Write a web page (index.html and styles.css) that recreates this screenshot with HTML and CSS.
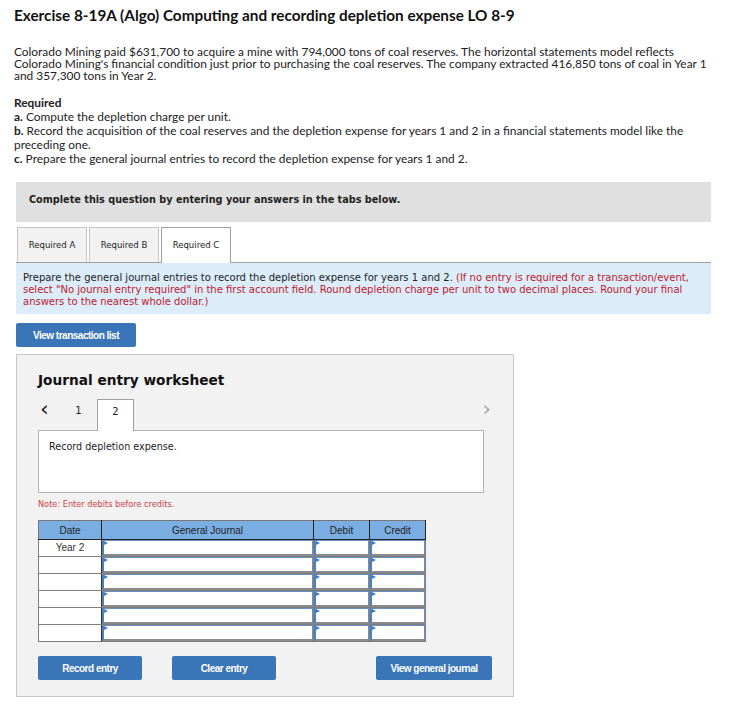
FILE: index.html
```html
<!DOCTYPE html>
<html lang="en">
<head>
  <meta charset="UTF-8">
  <title>Exercise 8-19A (Algo)</title>
  <link rel="stylesheet" href="styles.css">
</head>
<body>

  <h1 class="title">Exercise 8-19A (Algo) Computing and recording depletion expense LO 8-9</h1>

  <p class="intro">Colorado Mining paid $631,700 to acquire a mine with 794,000 tons of coal reserves. The horizontal statements model reflects Colorado Mining's financial condition just prior to purchasing the coal reserves. The company extracted 416,850 tons of coal in Year 1 and 357,300 tons in Year 2.</p>

  <div class="required">
    <div class="req-head">Required</div>
    <div><b>a.</b> Compute the depletion charge per unit.</div>
    <div><b>b.</b> Record the acquisition of the coal reserves and the depletion expense for years 1 and 2 in a financial statements model like the preceding one.</div>
    <div><b>c.</b> Prepare the general journal entries to record the depletion expense for years 1 and 2.</div>
  </div>

  <div class="complete-box">Complete this question by entering your answers in the tabs below.</div>

  <div class="tabs">
    <div class="tab">Required A</div>
    <div class="tab">Required B</div>
    <div class="tab active">Required C</div>
  </div>

  <div class="instructions">
    Prepare the general journal entries to record the depletion expense for years 1 and 2. <span class="red">(If no entry is required for a transaction/event, select "No journal entry required" in the first account field. Round depletion charge per unit to two decimal places. Round your final answers to the nearest whole dollar.)</span>
  </div>

  <button class="btn btn-list">View transaction list</button>

  <div class="worksheet">
    <h2 class="ws-title">Journal entry worksheet</h2>

    <div class="ws-nav">
      <span class="arrow">&lsaquo;</span>
      <span class="num">1</span>
      <span class="num current">2</span>
      <span class="arrow right">&rsaquo;</span>
    </div>

    <div class="ws-desc">Record depletion expense.</div>

    <div class="note">Note: Enter debits before credits.</div>

    <table class="journal">
      <thead>
        <tr>
          <th class="c-date">Date</th>
          <th class="c-acct">General Journal</th>
          <th class="c-amt">Debit</th>
          <th class="c-amt">Credit</th>
        </tr>
      </thead>
      <tbody>
        <tr>
          <td class="date">Year 2</td>
          <td><div class="field"></div></td>
          <td><div class="field"></div></td>
          <td><div class="field"></div></td>
        </tr>
        <tr>
          <td class="date"></td>
          <td><div class="field"></div></td>
          <td><div class="field"></div></td>
          <td><div class="field"></div></td>
        </tr>
        <tr>
          <td class="date"></td>
          <td><div class="field"></div></td>
          <td><div class="field"></div></td>
          <td><div class="field"></div></td>
        </tr>
        <tr>
          <td class="date"></td>
          <td><div class="field"></div></td>
          <td><div class="field"></div></td>
          <td><div class="field"></div></td>
        </tr>
        <tr>
          <td class="date"></td>
          <td><div class="field"></div></td>
          <td><div class="field"></div></td>
          <td><div class="field"></div></td>
        </tr>
        <tr>
          <td class="date"></td>
          <td><div class="field"></div></td>
          <td><div class="field"></div></td>
          <td><div class="field"></div></td>
        </tr>
      </tbody>
    </table>

    <div class="ws-actions">
      <button class="btn btn-record">Record entry</button>
      <button class="btn btn-clear">Clear entry</button>
      <button class="btn btn-view">View general journal</button>
    </div>
  </div>

</body>
</html>
```

FILE: styles.css
```css
body {
  margin: 0;
  padding: 0 43px 0 16px;
  background: #fff;
  color: #222;
  font-family: 'Lato', 'Liberation Sans', sans-serif;
}
.title {
  margin: 6px 0 0 -2px;
  font-size: 15.3px;
  font-weight: bold;
  line-height: 18px;
  color: #111;
}
.intro {
  margin: 22px 0 0 -2px;
  font-size: 11.9px;
  line-height: 12px;
}
.required {
  margin: 14px 0 0 -2px;
  font-size: 11.9px;
  line-height: 14px;
}
.req-head {
  font-weight: bold;
}
.complete-box {
  margin-top: 16px;
  height: 40px;
  box-sizing: border-box;
  padding: 10px 13px;
  background: #e0e0e0;
  font-family: 'DejaVu Sans', Verdana, sans-serif;
  font-size: 9.7px;
  font-weight: bold;
  line-height: 15px;
  color: #222;
}
.tabs {
  display: flex;
  gap: 2px;
  margin-top: 5px;
  padding-left: 1px;
  border-bottom: 1px solid #a0a0a0;
  font-family: 'DejaVu Sans Condensed', 'DejaVu Sans', sans-serif;
  font-size: 9.5px;
}
.tab {
  width: 70px;
  height: 35px;
  box-sizing: border-box;
  border: 1px solid #c4c4c4;
  border-bottom: none;
  background: #f2f2f2;
  text-align: center;
  line-height: 34px;
  white-space: nowrap;
  color: #222;
}
.tab.active {
  background: #fff;
  border-color: #a0a0a0;
  margin-bottom: -1px;
  height: 36px;
}
.instructions {
  height: 51px;
  box-sizing: border-box;
  padding: 9px 7px;
  background: #dcedf9;
  font-family: 'DejaVu Sans', Verdana, sans-serif;
  font-size: 10px;
  line-height: 12px;
  color: #222;
}
.red {
  color: #c0182c;
}
.btn {
  border: none;
  border-radius: 2px;
  background: #3a75b8;
  color: #fff;
  font-family: 'Liberation Sans', Arial, sans-serif;
  font-size: 10px;
  font-weight: bold;
  letter-spacing: -0.5px;
  height: 24px;
  padding: 0;
}
.btn-list {
  display: block;
  width: 120px;
  margin: 9px 0 0 0;
}
.worksheet {
  margin: 7px 0 0 0;
  width: 498px;
  height: 343px;
  box-sizing: border-box;
  padding: 0 29px 0 21px;
  background: #f2f2f2;
  border: 1px solid #c8c8c8;
}
.ws-title {
  margin: 16px 0 0 0;
  font-family: 'DejaVu Sans', Verdana, sans-serif;
  font-size: 13.7px;
  font-weight: bold;
  line-height: 18px;
  color: #111;
}
.ws-nav {
  display: flex;
  align-items: stretch;
  height: 31px;
  margin-top: 10px;
  font-family: 'DejaVu Sans', sans-serif;
  font-size: 10px;
}
.arrow {
  font-size: 22px;
  line-height: 20px;
  color: #222;
  width: 20px;
  padding-left: 2px;
}
.arrow.right {
  margin-left: auto;
  color: #aaa;
  text-align: right;
  width: 10px;
  margin-right: -7px;
}
.num {
  width: 37px;
  text-align: center;
  line-height: 24px;
}
.current {
  background: #fff;
  border: 1px solid #a0a0a0;
  border-bottom: none;
  box-sizing: border-box;
  height: 32px;
  margin-bottom: -1px;
}
.ws-desc {
  height: 63px;
  box-sizing: border-box;
  padding: 10px 10px;
  background: #fff;
  border: 1px solid #b4b4b4;
  font-family: 'DejaVu Sans', sans-serif;
  font-size: 9.6px;
  color: #222;
}
.note {
  margin-top: 6px;
  font-family: 'DejaVu Sans', sans-serif;
  font-size: 8.2px;
  color: #d04040;
}
.journal {
  margin-top: 11px;
  border-collapse: collapse;
  font-family: 'Liberation Sans', Arial, sans-serif;
  font-size: 10px;
}
.journal th {
  height: 18px;
  background: #7aaee3;
  border: 1px solid #222;
  border-top-color: #777;
  border-left-color: #777;
  font-weight: normal;
  color: #222;
  padding: 0;
}
.c-date {
  width: 62px;
}
.c-acct {
  width: 211px;
}
.c-amt {
  width: 55px;
}
.journal td {
  height: 16px;
  padding: 0;
  border: 1px solid #7d7d7d;
  background: #fff;
  text-align: center;
  color: #333;
  vertical-align: top;
  line-height: 15px;
}
.journal td.date {
  border-right-color: #333;
}
.field {
  position: relative;
  box-sizing: border-box;
  height: 16px;
  border: 1px solid #6d8fbf;
  border-left: 2px solid #4f7fc0;
  border-bottom: 2px solid #8a8a8a;
  background: #fff;
}
.field::before {
  content: "";
  position: absolute;
  top: 0;
  left: 0;
  border-top: 2.5px solid transparent;
  border-bottom: 2.5px solid transparent;
  border-left: 4px solid #3d7cc9;
}
.ws-actions {
  display: flex;
  margin-top: 14px;
  width: 454px;
}
.btn-record,
.btn-clear {
  width: 104px;
  margin-right: 30px;
}
.btn-view {
  width: 116px;
  margin-left: auto;
}
```
